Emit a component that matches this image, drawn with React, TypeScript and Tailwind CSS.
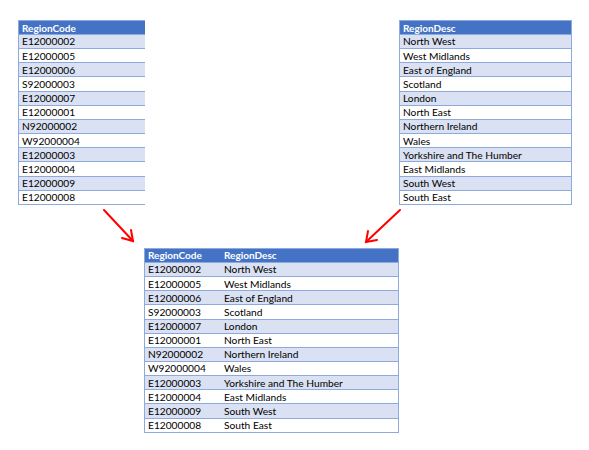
import React from "react";

const codes = ["E12000002","E12000005","E12000006","S92000003","E12000007","E12000001","N92000002","W92000004","E12000003","E12000004","E12000009","E12000008"];
const descs = ["North West","West Midlands","East of England","Scotland","London","North East","Northern Ireland","Wales","Yorkshire and The Humber","East Midlands","South West","South East"];

const font = { fontFamily: 'Lato, "Liberation Sans", Arial, sans-serif' };

function Header({ cols }: { cols: { label: string; w: string }[] }) {
  return (
    <div className="flex h-[14px] items-center bg-[#4472C4] border-t border-[#8EA9DB] text-white font-bold text-[10px] leading-none">
      {cols.map((c) => (
        <div key={c.label} className={`${c.w} pl-[3px]`}>{c.label}</div>
      ))}
    </div>
  );
}

function Row({ cells, i, widths }: { cells: string[]; i: number; widths: string[] }) {
  return (
    <div className={`flex h-[14.17px] items-center border-t border-[#8EA9DB] text-[10.2px] leading-none text-black ${i % 2 === 0 ? "bg-[#D9E1F2]" : "bg-white"}`}>
      {cells.map((c, k) => (
        <div key={k} className={`${widths[k]} pl-[3px] whitespace-nowrap`}>{c}</div>
      ))}
    </div>
  );
}

export default function App() {
  return (
    <div className="relative w-[589px] h-[450px] bg-white pt-[20px]" style={font}>
      <div className="flex">
        <div className="ml-[18px] w-[127px] border-l border-b border-[#8EA9DB]">
          <Header cols={[{ label: "RegionCode", w: "flex-1" }]} />
          {codes.map((c, i) => (
            <Row key={c + i} cells={[c]} i={i} widths={["flex-1"]} />
          ))}
        </div>
        <div className="ml-[254px] w-[173px] border-l border-r border-b border-[#8EA9DB]">
          <Header cols={[{ label: "RegionDesc", w: "flex-1" }]} />
          {descs.map((c, i) => (
            <Row key={c} cells={[c]} i={i} widths={["flex-1"]} />
          ))}
        </div>
      </div>
      <div className="mt-[43px] ml-[144px] w-[255px] border-l border-r border-b border-[#8EA9DB]">
        <Header cols={[{ label: "RegionCode", w: "w-[76px]" }, { label: "RegionDesc", w: "flex-1" }]} />
        {codes.map((c, i) => (
          <Row key={c + i} cells={[c, descs[i]]} i={i} widths={["w-[76px]", "flex-1"]} />
        ))}
      </div>
      <svg className="absolute left-0 top-0 pointer-events-none" width="589" height="450" viewBox="0 0 589 450">
        <g stroke="#FF0000" strokeWidth="2" fill="none" strokeLinecap="round">
          <line x1="104" y1="210" x2="133" y2="241" />
          <polyline points="122,238 133,241 131,230" />
          <line x1="400" y1="210" x2="366" y2="242" />
          <polyline points="368,231 366,242 377,240" />
        </g>
      </svg>
    </div>
  );
}
